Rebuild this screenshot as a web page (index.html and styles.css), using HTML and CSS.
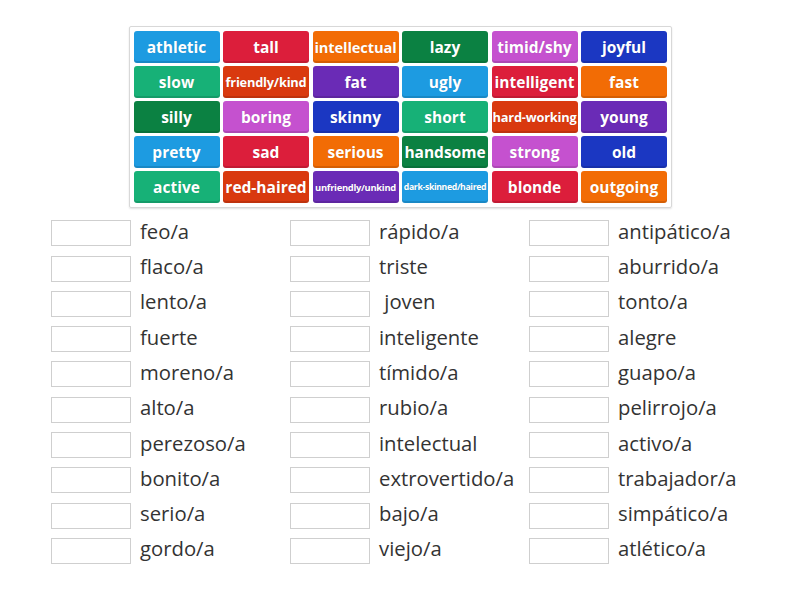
FILE: index.html
```html
<!DOCTYPE html>
<html>
<head>
<meta charset="utf-8">
<link rel="stylesheet" href="styles.css">
</head>
<body>
<div class="page">
  <div class="bank">
    <div class="tile blue">athletic</div>
    <div class="tile red">tall</div>
    <div class="tile orange s15">intellectual</div>
    <div class="tile dgreen">lazy</div>
    <div class="tile magenta">timid/shy</div>
    <div class="tile dblue">joyful</div>

    <div class="tile teal">slow</div>
    <div class="tile rorange s13">friendly/kind</div>
    <div class="tile purple">fat</div>
    <div class="tile blue">ugly</div>
    <div class="tile red">intelligent</div>
    <div class="tile orange">fast</div>

    <div class="tile dgreen">silly</div>
    <div class="tile magenta">boring</div>
    <div class="tile dblue">skinny</div>
    <div class="tile teal">short</div>
    <div class="tile rorange s13">hard-working</div>
    <div class="tile purple">young</div>

    <div class="tile blue">pretty</div>
    <div class="tile red">sad</div>
    <div class="tile orange">serious</div>
    <div class="tile dgreen">handsome</div>
    <div class="tile magenta">strong</div>
    <div class="tile dblue">old</div>

    <div class="tile teal">active</div>
    <div class="tile rorange">red-haired</div>
    <div class="tile purple s10">unfriendly/unkind</div>
    <div class="tile blue s9">dark-skinned/haired</div>
    <div class="tile red">blonde</div>
    <div class="tile orange">outgoing</div>
  </div>

  <div class="answers">
    <div class="row"><span class="box"></span><span class="word">feo/a</span></div>
    <div class="row"><span class="box"></span><span class="word">rápido/a</span></div>
    <div class="row"><span class="box"></span><span class="word">antipático/a</span></div>

    <div class="row"><span class="box"></span><span class="word">flaco/a</span></div>
    <div class="row"><span class="box"></span><span class="word">triste</span></div>
    <div class="row"><span class="box"></span><span class="word">aburrido/a</span></div>

    <div class="row"><span class="box"></span><span class="word">lento/a</span></div>
    <div class="row"><span class="box"></span><span class="word">&nbsp;joven</span></div>
    <div class="row"><span class="box"></span><span class="word">tonto/a</span></div>

    <div class="row"><span class="box"></span><span class="word">fuerte</span></div>
    <div class="row"><span class="box"></span><span class="word">inteligente</span></div>
    <div class="row"><span class="box"></span><span class="word">alegre</span></div>

    <div class="row"><span class="box"></span><span class="word">moreno/a</span></div>
    <div class="row"><span class="box"></span><span class="word">tímido/a</span></div>
    <div class="row"><span class="box"></span><span class="word">guapo/a</span></div>

    <div class="row"><span class="box"></span><span class="word">alto/a</span></div>
    <div class="row"><span class="box"></span><span class="word">rubio/a</span></div>
    <div class="row"><span class="box"></span><span class="word">pelirrojo/a</span></div>

    <div class="row"><span class="box"></span><span class="word">perezoso/a</span></div>
    <div class="row"><span class="box"></span><span class="word">intelectual</span></div>
    <div class="row"><span class="box"></span><span class="word">activo/a</span></div>

    <div class="row"><span class="box"></span><span class="word">bonito/a</span></div>
    <div class="row"><span class="box"></span><span class="word">extrovertido/a</span></div>
    <div class="row"><span class="box"></span><span class="word">trabajador/a</span></div>

    <div class="row"><span class="box"></span><span class="word">serio/a</span></div>
    <div class="row"><span class="box"></span><span class="word">bajo/a</span></div>
    <div class="row"><span class="box"></span><span class="word">simpático/a</span></div>

    <div class="row"><span class="box"></span><span class="word">gordo/a</span></div>
    <div class="row"><span class="box"></span><span class="word">viejo/a</span></div>
    <div class="row"><span class="box"></span><span class="word">atlético/a</span></div>
  </div>
</div>
</body>
</html>
```

FILE: styles.css
```css
html, body {
  margin: 0;
  padding: 0;
  background: #ffffff;
  font-family: "Open Sans", "Noto Sans", sans-serif;
}

.page {
  width: 800px;
  height: 600px;
  padding-top: 26px;
  box-sizing: border-box;
}

.bank {
  width: max-content;
  margin: 0 0 0 129px;
  padding: 3.5px;
  border: 1px solid #d8d8d8;
  border-radius: 2px;
  box-shadow: 0 1px 2px rgba(0, 0, 0, 0.12);
  display: grid;
  grid-template-columns: repeat(6, 86px);
  grid-auto-rows: 32px;
  column-gap: 3.5px;
  row-gap: 3.2px;
}

.tile {
  display: flex;
  align-items: center;
  justify-content: center;
  border-radius: 3px;
  color: #ffffff;
  font-weight: 700;
  font-size: 15.5px;
  white-space: nowrap;
  overflow: hidden;
  box-shadow: inset 0 -2px 0 rgba(0, 0, 0, 0.12);
  text-shadow: 0 0 1px rgba(0, 0, 0, 0.15);
}

.s15 { font-size: 14.6px; letter-spacing: -0.1px; }
.s13 { font-size: 12.8px; letter-spacing: -0.2px; }
.s10 { font-size: 9.4px; letter-spacing: -0.3px; }
.s9 { font-size: 8.7px; letter-spacing: -0.35px; }

.blue { background: #1d9be1; }
.red { background: #dc1e3b; }
.orange { background: #f26c05; }
.dgreen { background: #0b8142; }
.magenta { background: #c551cf; }
.dblue { background: #1b37c2; }
.teal { background: #17b177; }
.rorange { background: #d9390f; }
.purple { background: #6a2bb6; }

.answers {
  margin: 12.5px 0 0 51px;
  display: grid;
  grid-template-columns: repeat(3, 239px);
  row-gap: 9.3px;
}

.row {
  display: flex;
  align-items: center;
  height: 26px;
}

.box {
  width: 80px;
  height: 26px;
  box-sizing: border-box;
  border: 1px solid #cfcfcf;
  background: #ffffff;
  flex: none;
}

.word {
  margin-left: 9px;
  margin-top: -5px;
  font-size: 20.3px;
  line-height: 26px;
  color: #333333;
  white-space: nowrap;
}
```
